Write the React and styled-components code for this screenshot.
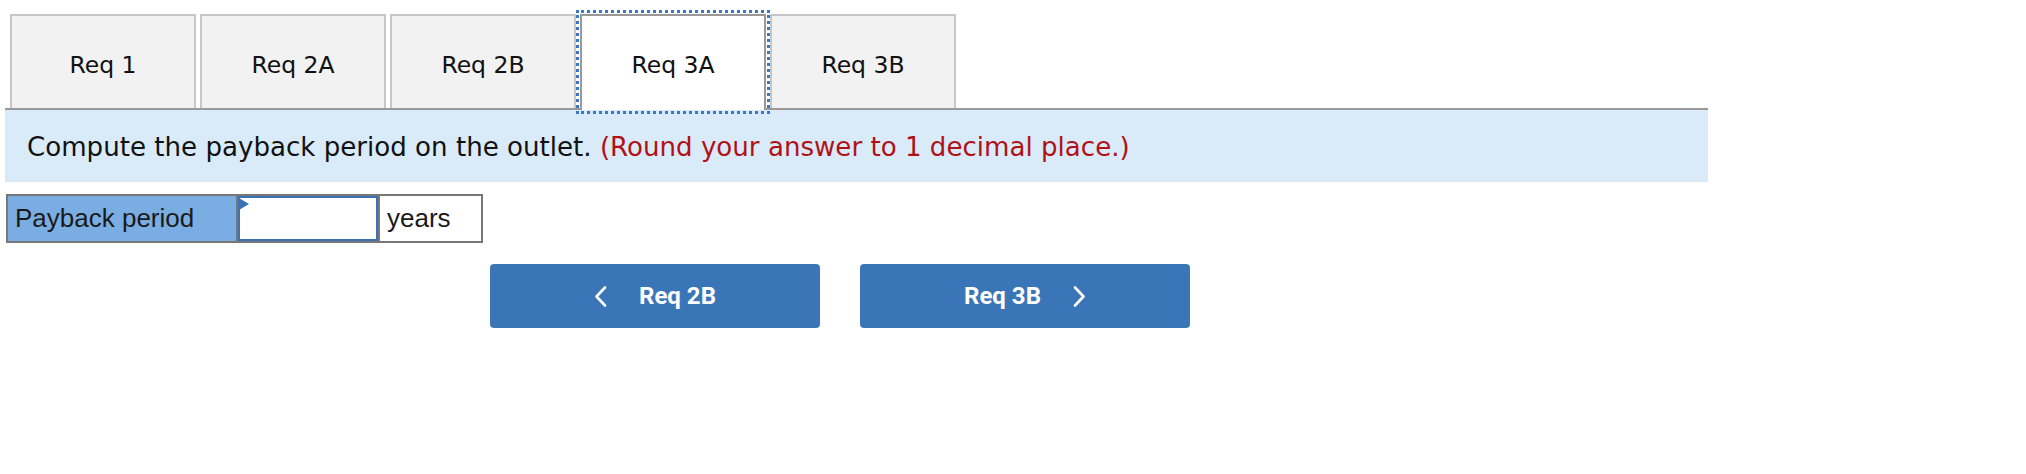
import styled, { createGlobalStyle } from 'styled-components';

const GlobalStyle = createGlobalStyle`
  body{
    margin: 0;
    background: #fff;
    font-family: "DejaVu Sans", Verdana, sans-serif;
  }
`;

const Page = styled.div`
  padding: 14px 318px 0 5px;
  width: 1703px;
`;

const TabBar = styled.div`
  display: flex;
  gap: 4px;
  padding-left: 5px;
  border-bottom: 2px solid #999;
  height: 94px;
`;

const Tab = styled.div`
  box-sizing: border-box;
  width: 186px;
  height: ${p => (p.$active ? '96px' : '94px')};
  margin-bottom: ${p => (p.$active ? '-2px' : '0')};
  border: 2px solid ${p => (p.$active ? '#999' : '#c6c6c6')};
  border-bottom: none;
  background: ${p => (p.$active ? '#fff' : '#f2f2f2')};
  outline: ${p => (p.$active ? '3px dotted #3a78c3' : 'none')};
  outline-offset: 1px;
  position: relative;
  z-index: ${p => (p.$active ? 1 : 0)};
  display: flex;
  align-items: center;
  justify-content: center;
  padding-top: ${p => (p.$active ? '3px' : '5px')};
  font-size: 23.5px;
  color: #111;
  cursor: pointer;
`;

const Prompt = styled.div`
  box-sizing: border-box;
  height: 72px;
  padding: 2px 0 0 22px;
  line-height: 70px;
  background: #d9ebf9;
  font-size: 26.1px;
  color: #111;
  .hint{
    color: #b11116;
  }
`;

const AnswerRow = styled.div`
  display: flex;
  width: fit-content;
  margin: 12px 0 0 1px;
  border: 2px solid #777;
  height: 45px;
  font-family: "Liberation Sans", Arial, sans-serif;
  font-size: 26px;
  color: #1a1a1a;
`;

const Cell = styled.div`
  box-sizing: border-box;
  width: ${p => p.$w}px;
  height: 45px;
  line-height: 45px;
  padding-left: ${p => p.$pad || 0}px;
  background: ${p => p.$bg || '#fff'};
  border-right: ${p => (p.$last ? 'none' : '2px solid #777')};
  position: relative;
`;

const Field = styled.input`
  box-sizing: border-box;
  display: block;
  width: 100%;
  height: 100%;
  margin: 0;
  border: 2px solid #3a72b5;
  background: #fff;
  outline: none;
  font: inherit;
  padding: 0 6px;
`;

const Flag = styled.span`
  position: absolute;
  left: 1px;
  top: 2px;
  width: 0;
  height: 0;
  border-top: 6px solid transparent;
  border-bottom: 6px solid transparent;
  border-left: 10px solid #3a72b5;
`;

const NavRow = styled.div`
  display: flex;
  gap: 40px;
  margin: 21px 0 0 485px;
`;

const NavButton = styled.button`
  box-sizing: border-box;
  width: 330px;
  height: 64px;
  border: none;
  border-radius: 4px;
  background: #3a76b7;
  color: #fff;
  font-family: Roboto, "Liberation Sans", sans-serif;
  font-weight: 700;
  font-size: 24px;
  display: flex;
  align-items: center;
  justify-content: center;
  gap: 32px;
  cursor: pointer;
  padding: 0;
  svg{
    display: block;
  }
`;

const Chevron = ({ dir }) => (
  <svg width="13" height="21" viewBox="0 0 13 21">
    <polyline
      points={dir === 'left' ? '11,1.5 2.5,10.5 11,19.5' : '2,1.5 10.5,10.5 2,19.5'}
      fill="none"
      stroke="#fff"
      strokeWidth="2.6"
      strokeLinecap="round"
      strokeLinejoin="round"
    />
  </svg>
);

const tabs = ['Req 1', 'Req 2A', 'Req 2B', 'Req 3A', 'Req 3B'];

export default function App() {
  const active = 'Req 3A';
  return (
    <>
      <GlobalStyle />
      <Page>
        <TabBar>
          {tabs.map(t => (
            <Tab key={t} $active={t === active}>{t}</Tab>
          ))}
        </TabBar>
        <Prompt>
          Compute the payback period on the outlet. <span className="hint">(Round your answer to 1 decimal place.)</span>
        </Prompt>
        <AnswerRow>
          <Cell $w={230} $pad={7} $bg="#7aaee3">Payback period</Cell>
          <Cell $w={142}>
            <Field type="text" aria-label="Payback period" />
            <Flag />
          </Cell>
          <Cell $w={101} $pad={7} $last>years</Cell>
        </AnswerRow>
        <NavRow>
          <NavButton>
            <Chevron dir="left" />
            <span>Req 2B</span>
          </NavButton>
          <NavButton>
            <span>Req 3B</span>
            <Chevron dir="right" />
          </NavButton>
        </NavRow>
      </Page>
    </>
  );
}
